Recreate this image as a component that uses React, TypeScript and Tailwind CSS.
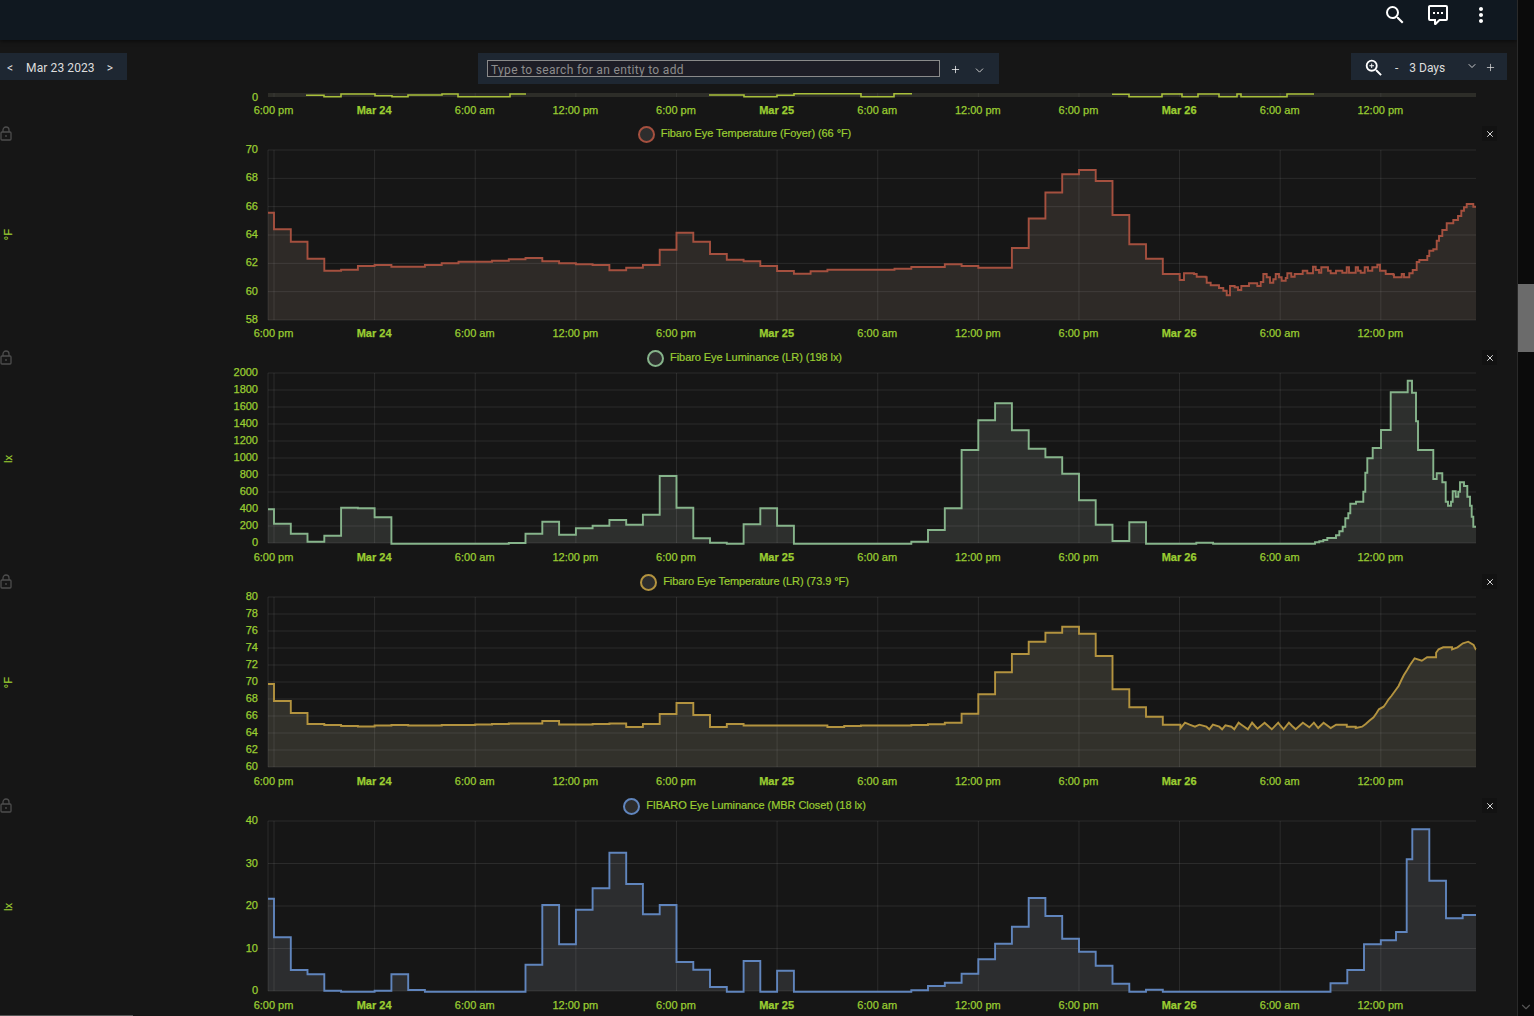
import React from "react";
import { ChevronDown, Plus, X } from "lucide-react";
import { MdMoreVert, MdOutlineZoomIn, MdSearch } from "react-icons/md";

type Pt = [number, number];

const PLOT_LEFT = 268;
const PLOT_RIGHT = 1476;
const HOUR = 16.77;
const TICK_START = 274;
const LABEL_CLASS = "fill-[#9acd32] stroke-[#9acd32] text-[11px] [stroke-width:0.25px]";

const X_LABELS = [
  "6:00 pm",
  "Mar 24",
  "6:00 am",
  "12:00 pm",
  "6:00 pm",
  "Mar 25",
  "6:00 am",
  "12:00 pm",
  "6:00 pm",
  "Mar 26",
  "6:00 am",
  "12:00 pm",
];

const rep = (v: number, n: number): number[] => Array(n).fill(v);

// hourly bins, values are screen y
const hourly = (first: number, values: number[]): Pt[] => [
  [PLOT_LEFT, first],
  ...values.map((v, k): Pt => [TICK_START + HOUR * k, v]),
];

// finer samples at the end, measured on a zoomed crop
const tail = (pts: Pt[], ox: number, oy: number, sx: number, sy: number): Pt[] =>
  pts.map(([x, y]): Pt => [ox + x / sx, oy + y / sy]);

// fine samples closer than smoothBelow px are joined straight, the rest as steps
const stepPath = (pts: Pt[], smoothBelow = 0) => {
  let d = `M${pts[0][0]} ${pts[0][1]}`;
  pts.slice(1).forEach(([x, y], i) => {
    if (x > 1100 && x - pts[i][0] < smoothBelow) d += `L${x.toFixed(1)} ${y.toFixed(1)}`;
    else d += `H${x.toFixed(1)}V${y.toFixed(1)}`;
  });
  return d;
};

const foyerTemp: Pt[] = [
  ...hourly(212.7, [
    229.3, 241.7, 258.7, 270.7, 269.7, 266, 265, 266.7, 266.7, 265, 263.3, 261.7, 261.7, 260.7,
    259.3, 258, 261.3, 263.3, 264.3, 265, 270.3, 267.7, 265, 249.7, 232.7, 241.7, 254, 259.7,
    261.3, 266, 271, 273.7, 271.3, 269.7, 269.7, 269.7, 269.7, 268.7, 267, 267, 264.3, 266,
    267.7, 267.7, 248, 218.5, 192.5, 174.3, 170, 181, 215, 244.3, 258.7, 274,
  ]),
  ...tail(
    [
      [497, 840], [510, 820], [540, 822], [548, 830], [575, 832], [578, 848], [590, 856], [615, 864],
      [628, 872], [638, 886], [648, 858], [662, 862], [672, 870], [682, 858], [705, 850], [730, 858],
      [740, 846], [748, 822], [758, 832], [768, 848], [778, 838], [785, 822], [795, 832], [803, 842],
      [815, 834], [820, 820], [832, 830], [842, 822], [866, 812], [880, 820], [897, 800], [905, 810],
      [915, 818], [922, 802], [942, 812], [950, 820], [966, 812], [985, 818], [998, 802], [1005, 818],
      [1025, 802], [1032, 812], [1040, 818], [1052, 802], [1062, 812], [1075, 802], [1090, 794],
      [1098, 812], [1115, 822], [1138, 824], [1140, 832], [1163, 822], [1170, 832], [1186, 820],
      [1196, 810], [1208, 786], [1216, 780], [1240, 768], [1246, 752], [1258, 748], [1268, 722],
      [1275, 708], [1285, 690], [1298, 670], [1318, 660], [1332, 648], [1342, 632], [1350, 622],
      [1358, 612], [1378, 620],
    ],
    1014,
    0,
    3,
    3
  ),
];

const lrLuminance: Pt[] = [
  ...hourly(509.3, [
    523.7, 533.7, 541.7, 535.7, 507.7, 508.3, 517.3, ...rep(543.7, 7), 543, 533.7, 521.7, 534.7,
    528.3, 525.7, 520, 524.7, 514.7, 476, 507.7, 538.3, 542.7, 543.7, 524.3, 508.3, 525.7,
    ...rep(543.7, 7), 541.7, 530, 508.3, 450, 420.3, 403.3, 430.3, 448.7, 457.3, 473.7, 500.3,
    524.7, 541, 522.3, ...rep(543.7, 3), 542.7, ...rep(543.7, 6),
  ]),
  ...tail(
    [
      [495, 547], [508, 544], [520, 540], [532, 534], [558, 526], [568, 514], [578, 500], [586, 475],
      [595, 460], [601, 431], [618, 425], [640, 395], [646, 338], [652, 295], [668, 264], [693, 210],
      [722, 97], [773, 62], [786, 98], [798, 184], [804, 270], [850, 357], [860, 340], [877, 367],
      [887, 425], [894, 437], [903, 425], [908, 394], [917, 410], [925, 395], [930, 367], [942, 378],
      [952, 410], [960, 437], [965, 470], [970, 500], [977, 500],
    ],
    1150,
    360,
    3,
    3
  ),
];

const lrTemp: Pt[] = [
  ...hourly(684, [
    701, 713, 724, 725, 726, 726.5, 725.5, 725, 725.5, 725.5, 725, 725, 724.5, 724, 723.5, 723.5,
    721, 724.5, 724.5, 724, 723.5, 727, 724, 714, 703, 715, 727, 724, ...rep(725.5, 5), 727, 726,
    725.5, 725.5, 725.5, 725, 724.3, 722.7, 713.7, 694.3, 672.3, 654, 641.7, 632.7, 626.7, 633.7,
    656, 689.3, 707.3, 716.7, 724.7,
  ]),
  ...tail(
    [
      [729, 355], [742, 338], [755, 344], [770, 350], [782, 344], [802, 350], [810, 358], [820, 344],
      [838, 350], [846, 358], [855, 346], [872, 350], [880, 358], [892, 338], [900, 344], [908, 350],
      [918, 358], [930, 338], [938, 348], [945, 356], [965, 338], [975, 348], [985, 358], [1003, 338],
      [1010, 348], [1018, 358], [1033, 338], [1042, 348], [1052, 358], [1072, 338], [1090, 352],
      [1103, 338], [1115, 354], [1130, 338], [1150, 354], [1165, 344], [1195, 350], [1220, 354],
      [1238, 350], [1248, 342], [1258, 332], [1270, 322], [1278, 310], [1285, 298], [1298, 290],
      [1305, 280], [1312, 268], [1320, 258], [1330, 243], [1340, 228], [1348, 210], [1355, 195],
      [1364, 180], [1372, 165], [1385, 145], [1405, 152], [1420, 142], [1445, 128], [1452, 118],
      [1465, 112], [1490, 118], [1505, 112], [1520, 100], [1535, 95], [1550, 105], [1556, 118],
    ],
    920,
    610,
    2.8,
    3
  ),
];

const closetLuminance: Pt[] = [
  ...hourly(898.7, [
    937.3, 970, 974.3, 990.7, 991.7, 991.7, 990.7, 974.3, 990, ...rep(991.7, 6), 964.7, 905, 944.3,
    909.7, 888.3, 852.7, 884, 914.3, 905, 962, 969.7, 987, 991.7, 961, 991.7, 970.7, ...rep(991.7, 7),
    990.3, 986, 982.7, 973.7, 959.3, 943.7, 926.7, 898, 916, 938.7, 951.7, 965.7, 983.7, 991.7,
    989.7, ...rep(991.7, 10), 983.3, 970, 944.3, 940.3,
  ]),
  ...tail(
    [
      [738, 396],
      [770, 178],
      [787, 88],
      [838, 242],
      [888, 355],
      [938, 345],
    ],
    1150,
    800,
    3,
    3
  ),
];

const CHARTS = [
  {
    title: "Fibaro Eye Temperature (Foyer) (66 °F)",
    unit: "°F",
    top: 123,
    plotTop: 150,
    plotBottom: 320,
    xLabelY: 337,
    labels: ["70", "68", "66", "64", "62", "60", "58"],
    line: "#a5503f",
    area: "#2e2a27",
    smooth: 0,
    points: foyerTemp,
  },
  {
    title: "Fibaro Eye Luminance (LR) (198 lx)",
    unit: "lx",
    top: 347,
    plotTop: 373,
    plotBottom: 543,
    xLabelY: 561,
    labels: ["2000", "1800", "1600", "1400", "1200", "1000", "800", "600", "400", "200", "0"],
    line: "#86b48b",
    area: "#2d2f2d",
    smooth: 0,
    points: lrLuminance,
  },
  {
    title: "Fibaro Eye Temperature (LR) (73.9 °F)",
    unit: "°F",
    top: 571,
    plotTop: 597,
    plotBottom: 767,
    xLabelY: 785,
    labels: ["80", "78", "76", "74", "72", "70", "68", "66", "64", "62", "60"],
    line: "#b3933f",
    area: "#32312b",
    smooth: 8,
    points: lrTemp,
  },
  {
    title: "FIBARO Eye Luminance (MBR Closet) (18 lx)",
    unit: "lx",
    top: 795,
    plotTop: 821,
    plotBottom: 991,
    xLabelY: 1009,
    labels: ["40", "30", "20", "10", "0"],
    line: "#6085bd",
    area: "#2c2d2f",
    smooth: 0,
    points: closetLuminance,
  },
];

// stepped stub of the chart scrolled off the top
const STUB_SEGMENTS: Pt[][] = [
  [
    [306, 95.3], [324, 96.7], [341, 94], [375, 95.7], [392, 96.7], [408, 95], [442, 94], [458, 96.7],
    [510, 94], [526, 94],
  ],
  [
    [709, 95], [744, 96.7], [777, 95.3], [794, 93.7], [861, 96.7], [894, 93.7], [912, 93.7],
  ],
  [
    [1112, 94.3], [1129, 96.7], [1162, 94], [1182, 96.7], [1198, 94], [1219, 96.7], [1237, 94],
    [1241, 96.7], [1287, 94], [1314, 94],
  ],
];

const tickX = (i: number) => TICK_START + i * 100.62;

const XAxisLabels = ({ y }: { y: number }) => (
  <>
    {X_LABELS.map((label, i) => (
      <text
        key={i}
        x={tickX(i) - 0.5}
        y={y}
        textAnchor="middle"
        className={`${LABEL_CLASS} ${label.startsWith("Mar") ? "font-bold" : ""}`}
      >
        {label}
      </text>
    ))}
  </>
);

const LockIcon = () => (
  <svg width="13" height="15" viewBox="0 0 13 15" fill="none" stroke="#4d4d4d" strokeWidth="1.3">
    <rect x="1" y="6" width="10" height="8" rx="1" />
    <path d="M3 6V4a3 3 0 0 1 6 0v2" />
    <circle cx="6" cy="10" r="0.9" fill="#4d4d4d" stroke="none" />
  </svg>
);

const Chart = ({ chart }: { chart: (typeof CHARTS)[number] }) => {
  const { plotTop, plotBottom, labels, points, line, top } = chart;
  const gap = (plotBottom - plotTop) / (labels.length - 1);
  const lineD = stepPath(points, chart.smooth) + `H${PLOT_RIGHT}`;
  const areaD = `${lineD}V${plotBottom}H${PLOT_LEFT}Z`;

  return (
    <div className="h-[224px] shrink-0">
      <div className="relative flex h-[22px] w-[1489px] items-center justify-center">
        <span className="absolute left-0 top-[3px]">
          <LockIcon />
        </span>
        <span
          className="mr-[6px] h-[17px] w-[17px] rounded-full border-2 bg-[#2d2d2d]"
          style={{ borderColor: line }}
        />
        <span className="mb-[2px] text-[11px] tracking-[-0.07px] text-[#9acd32] [-webkit-text-stroke:0.2px_#9acd32]">
          {chart.title}
        </span>
        <span className="absolute left-[1482px] top-[3px] flex h-[15px] w-[15px] items-center justify-center bg-[#121212] text-white">
          <X size={10} strokeWidth={2} />
        </span>
      </div>
      <div className="flex">
        <div className="flex h-[180px] w-[230px] shrink-0 items-center">
          <span className="ml-[2px] rotate-180 text-[11px] leading-3 text-[#9acd32] [-webkit-text-stroke:0.2px_#9acd32] [writing-mode:vertical-rl]">
            {chart.unit}
          </span>
        </div>
        <svg
          width="1287"
          height="202"
          viewBox={`230 ${top + 22} 1287 202`}
          className="block overflow-visible"
        >
          <path d={areaD} fill={chart.area} />
          {labels.map((label, i) => {
            const y = plotTop + gap * i;
            return (
              <g key={label}>
                <line x1={PLOT_LEFT} x2={PLOT_RIGHT} y1={y} y2={y} stroke="#ffffff" strokeOpacity="0.09" />
                <text x={258} y={y + 3} textAnchor="end" className={LABEL_CLASS}>
                  {label}
                </text>
              </g>
            );
          })}
          <line x1={PLOT_LEFT} x2={PLOT_LEFT} y1={plotTop} y2={plotBottom} stroke="#ffffff" strokeOpacity="0.09" />
          {X_LABELS.map((_, i) => (
            <line
              key={i}
              x1={tickX(i)}
              x2={tickX(i)}
              y1={plotTop}
              y2={plotBottom}
              stroke="#ffffff"
              strokeOpacity="0.09"
            />
          ))}
          <path d={lineD} fill="none" stroke={line} strokeWidth="1.9" />
          <XAxisLabels y={chart.xLabelY} />
        </svg>
      </div>
    </div>
  );
};

const StubChart = () => (
  <div className="flex h-[30px] shrink-0">
    <div className="w-[230px] shrink-0" />
    <svg width="1287" height="30" viewBox="230 93 1287 30" className="block">
      <rect x={PLOT_LEFT} y={93} width={PLOT_RIGHT - PLOT_LEFT} height={4} fill="#2d2d28" />
      {X_LABELS.map((_, i) => (
        <line key={i} x1={tickX(i)} x2={tickX(i)} y1={93} y2={97} stroke="#3a3a36" />
      ))}
      {STUB_SEGMENTS.map((seg, i) => (
        <path key={i} d={stepPath(seg)} fill="none" stroke="#a8bf3a" strokeWidth="1.6" />
      ))}
      <text x={258} y={101} textAnchor="end" className={LABEL_CLASS}>
        0
      </text>
      <XAxisLabels y={114} />
    </svg>
  </div>
);

const CommentIcon = () => (
  <svg width="24" height="24" viewBox="0 0 24 24" fill="#ffffff">
    <path d="M9,22A1,1 0 0,1 8,21V18H4A2,2 0 0,1 2,16V4C2,2.89 2.9,2 4,2H20A2,2 0 0,1 22,4V16A2,2 0 0,1 20,18H13.9L10.2,21.71C10,21.9 9.75,22 9.5,22H9M10,16V19.08L13.08,16H20V4H4V16H10M17,11H15V9H17V11M13,11H11V9H13V11M9,11H7V9H9V11Z" />
  </svg>
);

export default function App() {
  return (
    <div className="relative flex h-screen w-full overflow-hidden bg-[#161616] font-['Liberation_Sans',sans-serif]">
      <div className="flex w-[1517px] shrink-0 flex-col">
        <header className="flex h-10 shrink-0 items-start justify-end bg-[#101820] pr-[15px] pt-[3px] text-white shadow-[0_1px_4px_rgba(0,0,0,0.6)]">
          <span className="flex w-[44px] justify-center pl-[3px]">
            <MdSearch size={24} />
          </span>
          <span className="flex w-[44px] justify-center pl-[1px]">
            <CommentIcon />
          </span>
          <span className="flex w-[43px] justify-center">
            <MdMoreVert size={24} />
          </span>
        </header>

        <div className="mt-[13px] flex h-[31px] shrink-0 items-start justify-between pr-[10px] font-['Roboto',sans-serif] text-[12px] text-[#dddddd]">
          <div className="flex h-[27px] w-[127px] items-center bg-[#1e2732] pl-[7px] pt-[2px]">
            <span>&lt;</span>
            <span className="ml-[13px] tracking-[0.1px]">Mar 23 2023</span>
            <span className="ml-[12px]">&gt;</span>
          </div>

          <div className="-ml-px flex h-[31px] w-[521px] items-center bg-[#1e2732] pl-[9px]">
            <div className="flex h-[17px] w-[453px] items-center border border-[#8a8a8a] bg-[#1d1d26] pl-[3px] pt-[2px] tracking-[0.33px] text-[#8c8c8c]">
              Type to search for an entity to add
            </div>
            <Plus size={11} strokeWidth={1.6} className="ml-[10px] mt-[2px] text-white" />
            <ChevronDown size={13} strokeWidth={1.8} className="ml-[12px] mt-[3px] text-[#cccccc]" />
          </div>

          <div className="flex h-[27px] w-[156px] items-center bg-[#1e2732] pl-[12px] pt-[2px]">
            <MdOutlineZoomIn size={22} className="text-white" />
            <span className="ml-[10px]">-</span>
            <span className="ml-[11px]">3 Days</span>
            <ChevronDown size={12} strokeWidth={1.8} className="mb-[3px] ml-[21px]" />
            <Plus size={11} strokeWidth={1.6} className="ml-[7px]" />
          </div>
        </div>

        <div className="mt-[9px]">
          <StubChart />
          {CHARTS.map((chart) => (
            <Chart key={chart.title} chart={chart} />
          ))}
        </div>
      </div>

      <div className="flex w-[17px] shrink-0 flex-col border-l border-[#2a2a2a] bg-[#0b0b0b]">
        <div className="mt-[284px] h-[68px] shrink-0 bg-[#6b6b6b]" />
        <ChevronDown size={14} strokeWidth={2} className="mb-[2px] ml-[1px] mt-auto text-[#555555]" />
      </div>

      <div className="absolute bottom-0 left-0 h-px w-[133px] bg-[#555555]" />
    </div>
  );
}
